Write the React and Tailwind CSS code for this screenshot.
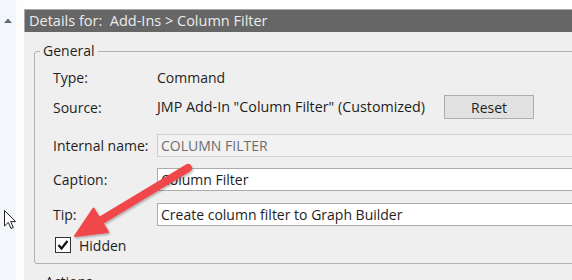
import React from "react";

export default function App() {
  return (
    <div className="relative w-[572px] h-[280px] overflow-hidden flex bg-white font-['Open_Sans',sans-serif] text-[14px] text-[#1e1e1e]">
      {/* left scroll strip */}
      <div className="w-[16px] shrink-0 bg-[#f3f7fc] pt-[18px] pl-[4px]">
        <svg width="8" height="5" viewBox="0 0 8 5">
          <polygon points="0,5 4,0.5 8,5" fill="#5f6b7a" />
        </svg>
      </div>
      <div className="w-[8px] shrink-0 bg-[#fdfdfd]" />
      {/* main */}
      <div className="flex-1 min-w-0 flex flex-col">
        <div className="h-[9px] shrink-0 bg-white" />
        <div className="h-[23px] shrink-0 bg-[#666666] border-t border-l border-[#a8a8a8] pl-[4px] text-[14.5px] leading-[21px] text-[#ececec] whitespace-nowrap">
          Details for:&nbsp; Add-Ins &gt; Column Filter
        </div>
        <div className="flex-1 shrink-0 bg-[#efefef] pl-[10px] pt-[9px]">
          <fieldset className="w-[620px] border border-[#b2b2b2] rounded-[3px] pb-[10px]">
            <legend className="ml-[5px] px-[3px] leading-[20px]">General</legend>
            <div className="pl-[18px]">
              <div className="mt-[5px] h-[22px] flex items-center">
                <div className="w-[104px] shrink-0">Type:</div>
                <div>Command</div>
              </div>
              <div className="mt-[7px] h-[24px] flex items-center">
                <div className="w-[104px] shrink-0">Source:</div>
                <div className="w-[287px] shrink-0 whitespace-nowrap text-[14.3px]">JMP Add-In "Column Filter" (Customized)</div>
                <div className="w-[90px] h-[24px] border border-[#adadad] bg-[#e1e1e1] flex items-center justify-center">Reset</div>
              </div>
              <div className="mt-[15px] h-[23px] flex items-center">
                <div className="w-[104px] shrink-0">Internal name:</div>
                <div className="flex-1 h-full border border-[#cfcfcf] bg-[#f2f2f2] px-[3px] leading-[21px] text-[#6d6d6d]">COLUMN FILTER</div>
              </div>
              <div className="mt-[11px] h-[23px] flex items-center">
                <div className="w-[104px] shrink-0">Caption:</div>
                <div className="flex-1 h-full border border-[#ababab] bg-white px-[3px] leading-[21px]">Column Filter</div>
              </div>
              <div className="mt-[12px] h-[23px] flex items-center">
                <div className="w-[104px] shrink-0">Tip:</div>
                <div className="flex-1 h-full border border-[#ababab] bg-white px-[3px] leading-[21px]">Create column filter to Graph Builder</div>
              </div>
              <div className="mt-[11px] h-[16px] flex items-center ml-[2px]">
                <div className="w-[16px] h-[16px] border border-[#333333] bg-white flex items-center justify-center">
                  <svg width="14" height="14" viewBox="0 0 14 14">
                    <polyline points="2.5,7 5.5,10.5 11.5,3" fill="none" stroke="#111" strokeWidth="2.2" />
                  </svg>
                </div>
                <div className="ml-[8px]">Hidden</div>
              </div>
            </div>
          </fieldset>
          <fieldset className="mt-[8px] w-[620px] border border-[#b2b2b2] rounded-[3px] h-[40px]">
            <legend className="ml-[7px] px-[3px] leading-[20px]">Actions</legend>
          </fieldset>
        </div>
      </div>

      {/* cursor */}
      <svg className="absolute left-[4px] top-[210px] pointer-events-none" width="14" height="20" viewBox="0 0 14 20">
        <path d="M0.5,0.5 L0.5,16 L4.3,12.4 L7,18.5 L9.3,17.5 L6.7,11.6 L11.5,11.6 Z" fill="white" stroke="#222" strokeWidth="1" strokeLinejoin="round" />
      </svg>

      {/* red arrow */}
      <svg className="absolute left-0 top-0 pointer-events-none" width="572" height="280" viewBox="0 0 572 280">
        <defs>
          <filter id="sh" x="-10%" y="-10%" width="130%" height="130%">
            <feDropShadow dx="1" dy="1.5" stdDeviation="1.2" floodColor="#000" floodOpacity="0.3" />
          </filter>
        </defs>
        <g filter="url(#sh)">
          <line x1="188" y1="168" x2="100" y2="221" stroke="#f0464b" strokeWidth="8" strokeLinecap="round" />
          <polygon points="75,236 108,232 93.5,208.5" fill="#f0464b" stroke="#f0464b" strokeWidth="2" strokeLinejoin="round" />
        </g>
      </svg>
    </div>
  );
}
